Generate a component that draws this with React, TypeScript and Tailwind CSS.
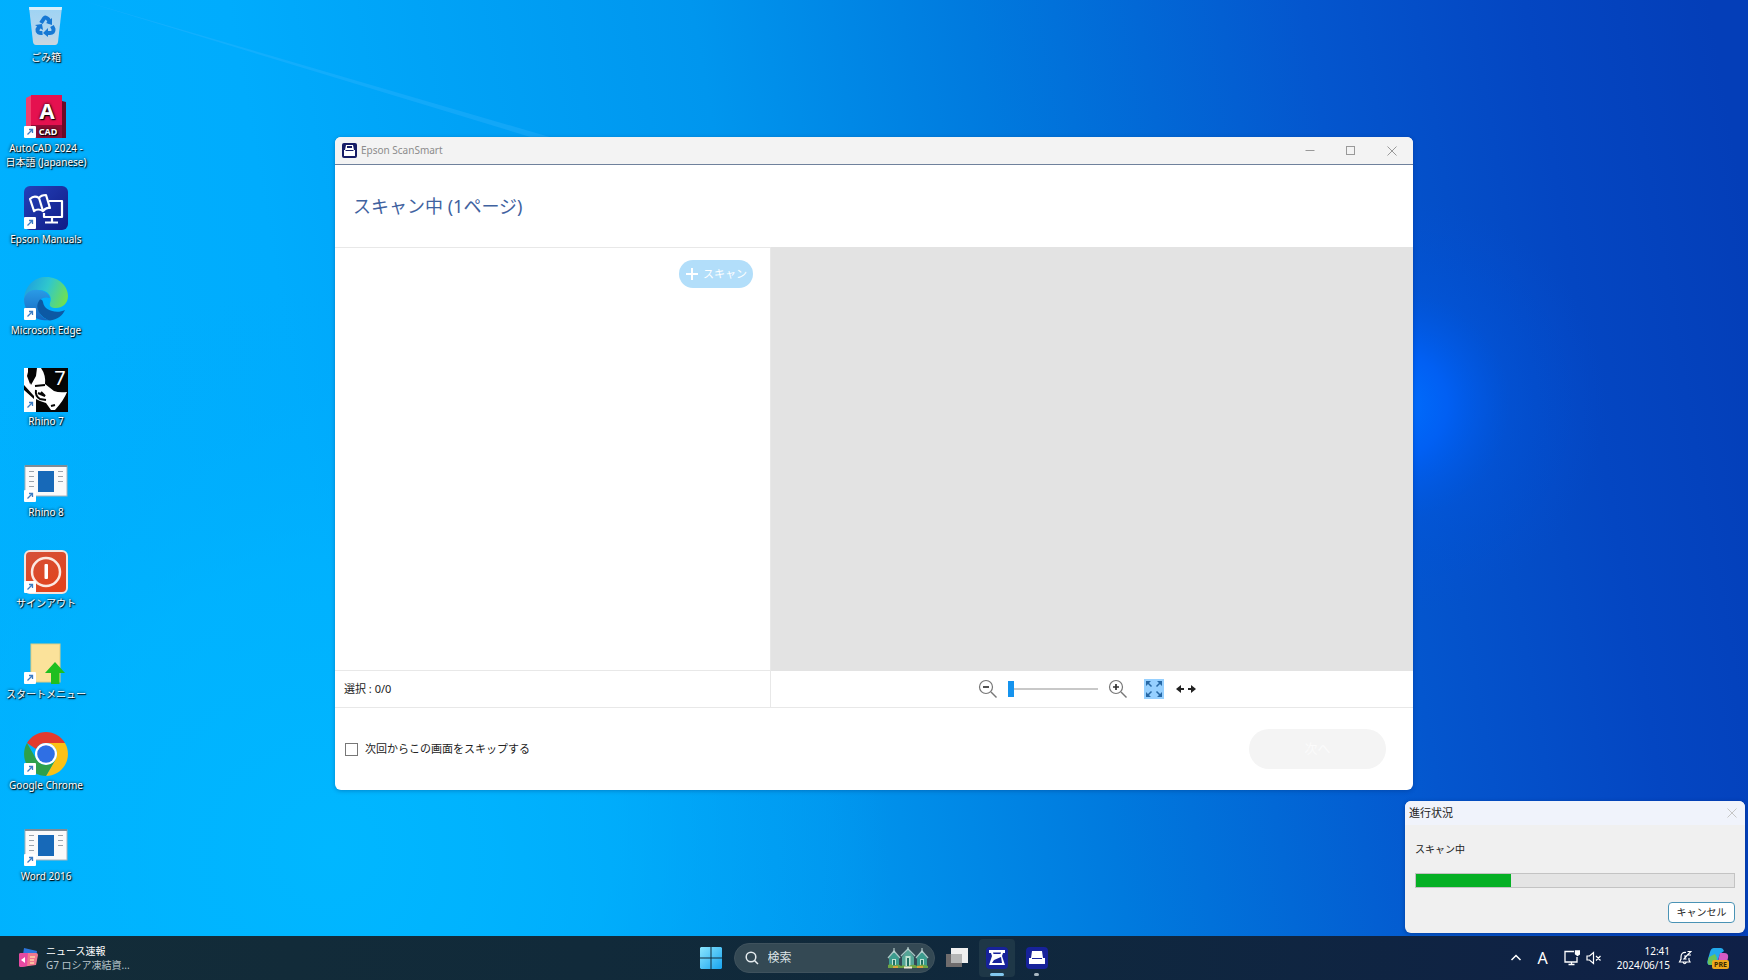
import React from 'react';

const jp = "font-['Noto_Sans','Noto_Sans_CJK_JP',sans-serif]";

function Shortcut() {
  return (
    <g>
      <rect x="0" y="31" width="12" height="12" rx="1" fill="#fff" />
      <path d="M3.500 39.500 L8 35 M5 34.500 H8.500 V38" stroke="#3c7cc4" strokeWidth="1.300" fill="none" />
    </g>
  );
}

function Icon({ children, link = true }: { children: React.ReactNode; link?: boolean }) {
  return (
    <svg viewBox="0 0 44 44" className="size-11 shrink-0" aria-hidden="true">
      {children}
      {link && <Shortcut />}
    </svg>
  );
}

const RecycleBin = () => (
  <Icon link={false}>
    <defs>
      <linearGradient id="bin" x1="0" y1="0" x2="0" y2="1">
        <stop offset="0" stopColor="#9dd3f4" />
        <stop offset="0.700" stopColor="#b4d6ee" />
        <stop offset="1" stopColor="#cdd6dd" />
      </linearGradient>
    </defs>
    <path d="M5 3 L38 3 L34 38 Q33.500 41 31 41 H12 Q9.500 41 9 38 Z" fill="url(#bin)" />
    <path d="M5 3 H38 L37.600 6 H5.400 Z" fill="#d8effb" />
    <g fill="none" stroke="#1678d4" strokeWidth="4">
      <path d="M17 19 L20 14.500 Q22 12.500 24 15 L26 18.500" />
      <path d="M28 22 L29.500 25 Q30 29 26 29 H23" />
      <path d="M18.500 29 Q13 29.500 13.500 25.500 L15.500 22" />
    </g>
    <path d="M28 14 V21 L22 19Z M24 24 V33 L19 29Z M11 21 L18 20 L19 26Z" fill="#1678d4" />
  </Icon>
);

const AutoCad = () => (
  <Icon>
    <path d="M2 3 L8 0 V42 L2 42Z" fill="#f0406f" />
    <path d="M38 6 L42 7 V43 H34Z" fill="#6b0a27" />
    <rect x="7" y="0" width="31" height="31" fill="#e5114f" />
    <rect x="7" y="30" width="31" height="13" fill="#8f0d35" />
    <text x="23" y="24" textAnchor="middle" fontSize="22" fontWeight="700" fill="#fff">A</text>
    <text x="24" y="40" textAnchor="middle" fontSize="9" fontWeight="700" fill="#fff">CAD</text>
  </Icon>
);

const Manuals = () => (
  <Icon>
    <defs>
      <linearGradient id="man" x1="0" y1="0" x2="1" y2="1">
        <stop offset="0" stopColor="#2440b8" />
        <stop offset="1" stopColor="#101c86" />
      </linearGradient>
    </defs>
    <rect width="44" height="44" rx="6" fill="url(#man)" />
    <g fill="none" stroke="#fff" strokeWidth="2.200" strokeLinejoin="round">
      <path d="M25 15 H38 V31 H20 V27 M28 31 V36 M21 36.500 H34" />
      <path d="M6 13 Q10 9 15 12 Q17 9 22 9 L26 22 Q22 21 19 25 Q14 22 10 25 Z" />
      <path d="M15 12 L19 25" />
    </g>
  </Icon>
);

const Edge = () => (
  <Icon>
    <defs>
      <linearGradient id="edgeTop" x1="0" y1="0.300" x2="1" y2="0.600">
        <stop offset="0" stopColor="#1d9fe0" />
        <stop offset="0.500" stopColor="#30c8cc" />
        <stop offset="1" stopColor="#70e050" />
      </linearGradient>
      <linearGradient id="edgeSide" x1="0" y1="0" x2="0" y2="1">
        <stop offset="0" stopColor="#2a9be6" />
        <stop offset="1" stopColor="#1565bf" />
      </linearGradient>
    </defs>
    <path d="M0 22 C1 8 11 0 22 0 C36 0 44 10 44 19 C44 27 38 31 32 31 C27 31 25 29 26 26 C29 20 24 13 15 13 C8 13 2 17 0 22Z" fill="url(#edgeTop)" />
    <path d="M0 22 C2 15 8 12 14 13 C20 13 25 17 26 21 C20 19 14 22 14 29 C14 37 20 43 27 43 C12 45 0 36 0 22Z" fill="url(#edgeSide)" />
    <path d="M15 24 C10 31 17 41 26 43.500 C33 43 39 38 41 33 C33 37 20 34 19 25 C18 22 16 22 15 24Z" fill="#0c59a4" />
  </Icon>
);

const Rhino7 = () => (
  <Icon>
    <rect width="44" height="44" fill="#050505" />
    <path d="M0 0 H4 V8 L7 17 L12 8 L13 0 H17 Q22 7 21 16 L30 23 Q35 25 43 24 Q40 32 31 42 L27 42 L22 35 L16 33 L12 31 V44 H0Z" fill="#fff" />
    <path d="M11 18 L21 17 M12 22 Q11 28 16 31 L22 32 M14 25 L21 28 L17 24 M27 38 L31 37" fill="none" stroke="#050505" strokeWidth="2" />
    <path d="M5 0 H11 L10 9 L6 16 L3 8Z M0 17 L10 28 V31 L0 22Z" fill="#050505" />
    <text x="36" y="17" textAnchor="middle" fontSize="20" fill="#fff">7</text>
  </Icon>
);

const AppWindow = () => (
  <Icon>
    <rect x="1" y="7" width="42" height="30" fill="#fafafa" stroke="#aab3ba" />
    <rect x="1" y="6" width="42" height="2" fill="#7f8c96" />
    <rect x="14" y="12" width="16" height="21" fill="#1769b8" />
    <path d="M5 12.500 H10 M5 17.500 H10 M5 22.500 H10 M5 27.500 H10 M34 12.500 H39 M34 17.500 H39 M34 22.500 H39" stroke="#9ba3ab" />
  </Icon>
);

const SignOut = () => (
  <Icon>
    <defs>
      <linearGradient id="so" x1="0" y1="0" x2="0.600" y2="1">
        <stop offset="0" stopColor="#d4523a" />
        <stop offset="1" stopColor="#e2431c" />
      </linearGradient>
    </defs>
    <rect x="1" y="1" width="42" height="42" rx="5" fill="url(#so)" stroke="#f3e4df" strokeWidth="2" />
    <circle cx="22" cy="22" r="14" fill="none" stroke="#fbe9e2" strokeWidth="2.500" />
    <rect x="20.500" y="14" width="3.500" height="15" rx="1" fill="#fff" />
  </Icon>
);

const StartMenu = () => (
  <Icon>
    <rect x="7" y="3" width="29" height="38" fill="#fbe29a" stroke="#e0cd83" />
    <path d="M21 32 L31 21 L41 32 H35.500 V43 H27 V32Z" fill="#1fbf1f" />
  </Icon>
);

const Chrome = () => (
  <Icon>
    <path d="M3 11 A22 22 0 0 1 41 11 L22 11 A11 11 0 0 0 12 17Z" fill="#e33b2e" />
    <path d="M22 11 H41 A22 22 0 0 1 22 44 L31.500 27.500 A11 11 0 0 0 22 11Z" fill="#fbc116" />
    <path d="M3 11 L12.500 27.500 A11 11 0 0 0 31.500 27.500 L22 44 A22 22 0 0 1 3 11Z" fill="#2da04b" />
    <circle cx="22" cy="22" r="11" fill="#fff" />
    <circle cx="22" cy="22" r="8.800" fill="#2f6fe4" />
  </Icon>
);

const shortcuts = [
  { label: 'ごみ箱', icon: <RecycleBin /> },
  { label: 'AutoCAD 2024 - 日本語 (Japanese)', icon: <AutoCad /> },
  { label: 'Epson Manuals', icon: <Manuals /> },
  { label: 'Microsoft Edge', icon: <Edge /> },
  { label: 'Rhino 7', icon: <Rhino7 /> },
  { label: 'Rhino 8', icon: <AppWindow /> },
  { label: 'サインアウト', icon: <SignOut /> },
  { label: 'スタートメニュー', icon: <StartMenu /> },
  { label: 'Google Chrome', icon: <Chrome /> },
  { label: 'Word 2016', icon: <AppWindow /> },
];

function Wallpaper() {
  return (
    <svg className="absolute inset-0 size-full" viewBox="0 0 1748 980" preserveAspectRatio="none" aria-hidden="true">
      <defs>
        <linearGradient id="wallBase" gradientUnits="userSpaceOnUse" x1="-40" y1="600" x2="1760" y2="290">
          <stop offset="0" stopColor="#00b2ff" />
          <stop offset="0.200" stopColor="#00acfd" />
          <stop offset="0.450" stopColor="#0096ee" />
          <stop offset="0.600" stopColor="#007ade" />
          <stop offset="0.780" stopColor="#0456ce" />
          <stop offset="0.900" stopColor="#0446c2" />
          <stop offset="1" stopColor="#043eb8" />
        </linearGradient>
        <radialGradient id="wallGlow" gradientUnits="userSpaceOnUse" cx="1395" cy="405" r="210">
          <stop offset="0" stopColor="#0070ff" />
          <stop offset="0.250" stopColor="#0062fa" stopOpacity="0.850" />
          <stop offset="0.550" stopColor="#0058e4" stopOpacity="0.350" />
          <stop offset="1" stopColor="#0050d8" stopOpacity="0" />
        </radialGradient>
        <radialGradient id="wallLow" gradientUnits="userSpaceOnUse" cx="330" cy="850" r="560">
          <stop offset="0" stopColor="#00b7ff" />
          <stop offset="0.500" stopColor="#00b5ff" stopOpacity="0.600" />
          <stop offset="1" stopColor="#00a8fa" stopOpacity="0" />
        </radialGradient>
      </defs>
      <rect width="1748" height="980" fill="url(#wallBase)" />
      <rect width="1748" height="980" fill="url(#wallLow)" />
      <rect width="1748" height="980" fill="url(#wallGlow)" />
      <path d="M80 0 L560 140 L1000 300 L540 140Z" fill="#49bcff" opacity="0.250" />
    </svg>
  );
}

function Magnifier({ plus = false }: { plus?: boolean }) {
  return (
    <svg viewBox="0 0 20 20" className="size-5" fill="none" stroke="#777" aria-hidden="true">
      <circle cx="8" cy="8" r="6.500" strokeWidth="1.200" />
      <path d="M13 13 L18.500 18.500" strokeWidth="1.400" />
      <path d={plus ? 'M5 8 H11 M8 5 V11' : 'M5 8 H11'} stroke="#333" strokeWidth="1.700" />
    </svg>
  );
}

function ScanWindow() {
  return (
    <section aria-label="Epson ScanSmart" className="relative flex h-[653px] w-full max-w-[1078px] flex-col overflow-hidden rounded-md bg-white shadow-[0_1px_4px_rgba(0,30,90,0.3)]">
      <header className="flex h-7 shrink-0 items-center border-b border-[#6f819c] bg-[#f3f3f3] pl-[7px]">
        <svg viewBox="0 0 15 15" className="size-[15px]" aria-hidden="true">
          <rect width="15" height="15" rx="2" fill="#161c66" />
          <path d="M4 2 H11 L12 7 H13 V13 H2 V7 H3Z" fill="#fff" />
          <path d="M5 3 H10 V5 H5Z M3.500 7 H11.500 V8 H3.500Z" fill="#161c66" />
        </svg>
        <span className="ml-1 text-[10px] text-[#8c8c8c]">Epson ScanSmart</span>
        <div className="ml-auto flex h-full text-[#999]">
          <button aria-label="Minimize" className="flex w-[41px] items-center justify-center">
            <svg viewBox="0 0 10 10" className="size-[10px]" stroke="currentColor" fill="none"><path d="M0.500 4.500 H9.500" /></svg>
          </button>
          <button aria-label="Maximize" className="flex w-[41px] items-center justify-center">
            <svg viewBox="0 0 10 10" className="size-[10px]" stroke="currentColor" fill="none"><rect x="0.500" y="0.500" width="8" height="8" /></svg>
          </button>
          <button aria-label="Close" className="flex w-[42px] items-center justify-center">
            <svg viewBox="0 0 10 10" className="size-[10px]" stroke="currentColor" fill="none"><path d="M0.500 0.500 L9.500 9.500 M9.500 0.500 L0.500 9.500" /></svg>
          </button>
        </div>
      </header>
      <h1 className="flex h-[82px] shrink-0 items-center pl-[18px] text-[18px] text-[#3f62a0]">スキャン中 (1ページ)</h1>
      <div className="flex min-h-0 flex-1">
        <div className="flex w-[436px] shrink-0 flex-col border-r border-[#e8e8e8]">
          <div className="flex flex-1 items-start justify-end border-t border-[#e8e8e8] pt-3 pr-[17px]">
            <button className="flex h-7 w-[74px] items-center justify-center gap-1 rounded-full bg-[#b2defa] text-[11px] text-white">
              <svg viewBox="0 0 14 14" className="size-[14px]" stroke="#fff" strokeWidth="2" aria-hidden="true"><path d="M7 1 V13 M1 7 H13" /></svg>
              スキャン
            </button>
          </div>
          <div className="flex h-[37px] shrink-0 items-center border-t border-[#e8e8e8] pl-[9px] text-[11px] text-[#222]">選択 : 0/0</div>
        </div>
        <div className="flex min-w-0 flex-1 flex-col">
          <div className="flex-1 bg-[#e3e3e3]" />
          <div className="flex h-9 shrink-0 items-center justify-center pr-[10px]">
            <button aria-label="Zoom out"><Magnifier /></button>
            <input
              type="range"
              aria-label="Zoom"
              defaultValue={0}
              className="mx-[10px] h-4 w-[90px] appearance-none bg-transparent [&::-webkit-slider-runnable-track]:h-[2px] [&::-webkit-slider-runnable-track]:bg-[#c8c8c8] [&::-webkit-slider-thumb]:mt-[-7px] [&::-webkit-slider-thumb]:h-4 [&::-webkit-slider-thumb]:w-[6px] [&::-webkit-slider-thumb]:appearance-none [&::-webkit-slider-thumb]:bg-[#1593ee]"
            />
            <button aria-label="Zoom in"><Magnifier plus /></button>
            <button aria-label="Fit to window" className="ml-4">
              <svg viewBox="0 0 20 20" className="size-5" aria-hidden="true">
                <rect width="20" height="20" fill="#96d0ff" />
                <path d="M2 2 H7 L2 7Z M18 2 H13 L18 7Z M2 18 H7 L2 13Z M18 18 H13 L18 13Z" fill="#2768a5" />
                <path d="M3 3 L7.500 7.500 M17 3 L12.500 7.500 M3 17 L7.500 12.500 M17 17 L12.500 12.500" stroke="#2768a5" strokeWidth="1.500" />
              </svg>
            </button>
            <button aria-label="Fit to width" className="ml-3">
              <svg viewBox="0 0 20 10" className="h-[10px] w-5" fill="#222" aria-hidden="true">
                <path d="M0 5 L5 1 V4 H8 V6 H5 V9Z M20 5 L15 1 V4 H12 V6 H15 V9Z" />
              </svg>
            </button>
          </div>
        </div>
      </div>
      <footer className="flex h-[83px] shrink-0 items-center justify-between border-t border-[#e8e8e8] pr-[27px] pl-[10px]">
        <label className="flex items-center gap-[7px] text-[11px] text-[#222]">
          <input type="checkbox" className="size-[13px] appearance-none border border-[#777] bg-white" />
          次回からこの画面をスキップする
        </label>
        <button disabled className="h-10 w-[137px] rounded-full bg-[#f4f4f4] text-[13px] text-[#fbfbfb]">次へ</button>
      </footer>
    </section>
  );
}

function ProgressDialog() {
  return (
    <section aria-label="進行状況" className="absolute right-[3px] bottom-[3px] flex w-[340px] flex-col overflow-hidden rounded-md bg-[#f0f0f0] text-[11px] text-[#222] shadow-[0_1px_4px_rgba(0,20,80,0.4)]">
      <header className="flex h-6 items-center justify-between bg-[#f0f3fb] pr-2 pl-1">
        <span>進行状況</span>
        <button aria-label="Close" className="text-[#c6c6c6]">
          <svg viewBox="0 0 10 10" className="size-[10px]" stroke="currentColor" fill="none"><path d="M0.500 0.500 L9.500 9.500 M9.500 0.500 L0.500 9.500" /></svg>
        </button>
      </header>
      <div className="flex flex-col px-[10px] pt-4 pb-[10px]">
        <p className="text-[10px] leading-4">スキャン中</p>
        <div role="progressbar" aria-valuenow={30} className="mt-4 h-[15px] border border-[#c3c3c3] bg-[#e4e4e4]">
          <div className="h-full w-[30%] bg-[#06b025]" />
        </div>
        <button className="mt-[14px] h-[21px] w-[67px] self-end rounded border border-[#4a93b5] bg-white text-[10px]">キャンセル</button>
      </div>
    </section>
  );
}

function Houses() {
  return (
    <svg viewBox="0 0 42 22" className="h-[22px] w-[42px]" aria-hidden="true">
      <path d="M2 11 L7 4 L12 11 V19 H2Z M30 11 L35 4 L40 11 V19 H30Z" fill="#3c9c8e" />
      <path d="M15 10 L21 2 L27 10 V20 H15Z" fill="#55a596" />
      <path d="M1 11 L7 4 L13 11 M14 9 L21 2 L28 9 M29 11 L35 4 L41 11" fill="none" stroke="#a9c9c6" strokeWidth="1.300" />
      <path d="M7 1 V5 M21 0 V3 M35 1 V5" stroke="#c9dfdc" />
      <path d="M5 12 H9 V18 H5Z M18.500 9 H23.500 V19 H18.500Z M33 12 H37 V18 H33Z" fill="#bfe3d2" />
      <path d="M6 13 H8 V18 H6Z M20 11 H22 V19 H20Z M34 13 H36 V18 H34Z" fill="#207062" />
      <path d="M1 18 Q4 16 7 19 Q11 16 14 19 Q17 17 20 20 Q26 16 30 19 Q35 16 41 19 V21 H1Z" fill="#6fa544" />
      <path d="M6 20 H11 M30 20 H36" stroke="#d8a23c" strokeWidth="2" />
      <path d="M17 20.500 H25" stroke="#f0ead0" strokeWidth="2" />
    </svg>
  );
}

function Taskbar() {
  return (
    <footer className="relative grid h-11 shrink-0 grid-cols-[1fr_auto_1fr] items-center bg-linear-to-r from-[#132c38] via-[#10293b] to-[#0f2047] text-white">
      <button className="ml-4 flex items-center gap-[6px] justify-self-start text-left">
        <svg viewBox="0 0 24 24" className="size-6" aria-hidden="true">
          <path d="M8 2 L21 5 L19 18 L6 15Z" fill="#2d76dc" />
          <path d="M5 7 H20 Q22 7 22 9 L20 19 L5 21 Q3 21 3 19 V9 Q3 7 5 7Z" fill="#f0788f" />
          <path d="M5 7 H12 L11 20 L5 21 Q3 21 3 19 V9 Q3 7 5 7Z" fill="#e649a2" />
          <path d="M5 14 L9 11 V17Z" fill="#fff" />
          <path d="M14 11 H19 M14 14 H18 M14 17 H18" stroke="#ffd5a8" strokeWidth="1.500" />
        </svg>
        <span className="flex flex-col text-[10px] leading-[14px]">
          <span>ニュース速報</span>
          <span className="text-[#b9c6cd]">G7 ロシア凍結資...</span>
        </span>
      </button>
      <div className="flex h-full items-center pl-[6px]">
        <button aria-label="Start" className="mr-3">
          <svg viewBox="0 0 22 22" className="size-[22px]" aria-hidden="true">
            <defs>
              <linearGradient id="win" x1="0" y1="0" x2="1" y2="1">
                <stop offset="0" stopColor="#8be6ff" />
                <stop offset="1" stopColor="#17a3ee" />
              </linearGradient>
            </defs>
            <path d="M1 0 H10.500 V10.500 H0 V1Z M11.500 0 H21 L22 1 V10.500 H11.500Z M0 11.500 H10.500 V22 H1 L0 21Z M11.500 11.500 H22 V21 L21 22 H11.500Z" fill="url(#win)" />
          </svg>
        </button>
        <label className="flex h-[30px] w-[201px] items-center rounded-full border border-[#3f525d] bg-[#344954] pr-[5px] pl-[10px]">
          <svg viewBox="0 0 14 14" className="size-[14px] shrink-0" fill="none" stroke="#e6ecef" strokeWidth="1.500" aria-hidden="true"><circle cx="6" cy="6" r="4.800" /><path d="M9.500 9.500 L13 13" /></svg>
          <input type="text" aria-label="検索" placeholder="検索" className="ml-[9px] min-w-0 flex-1 bg-transparent text-xs placeholder:text-[#dbe3e7]" />
          <Houses />
        </label>
        <button aria-label="Task view" className="ml-[10px]">
          <svg viewBox="0 0 24 22" className="h-[22px] w-6" aria-hidden="true">
            <rect x="1" y="7" width="16" height="13" fill="#6f6c6d" />
            <rect x="6" y="1" width="17" height="15" fill="#efefef" />
            <rect x="6" y="7" width="11" height="9" fill="#b4b5b5" />
          </svg>
        </button>
        <button aria-label="Epson Scan" className="ml-[10px] flex h-[38px] w-9 flex-col items-center justify-end gap-1 rounded bg-[#1e3747] pb-[1px]">
          <svg viewBox="0 0 22 22" className="size-[22px]" aria-hidden="true">
            <rect width="22" height="22" rx="4" fill="#17229a" />
            <path d="M3 3 H19 V6 H17 L16 9 L19 18 H3 L6 9 L5 6 H3Z" fill="#fff" />
            <path d="M7 5.500 H15 L14.500 7 H7.500Z M6 16 L8 13 L15 10 L16 16Z" fill="#17229a" />
          </svg>
          <span className="h-[3px] w-[14px] rounded-full bg-[#82c8ee]" />
        </button>
        <button aria-label="Epson ScanSmart" className="ml-1 flex h-[38px] w-9 flex-col items-center justify-end gap-1 pb-[1px]">
          <svg viewBox="0 0 22 22" className="size-[22px]" aria-hidden="true">
            <rect width="22" height="22" rx="4" fill="#17229a" />
            <path d="M6 4 H16 L17 11 H19 V17 H3 V11 H5Z" fill="#fff" />
            <path d="M6 11.500 H16" stroke="#17229a" strokeWidth="1" />
          </svg>
          <span className="h-[3px] w-[5px] rounded-full bg-[#a9b8c2]" />
        </button>
      </div>
      <div className="mr-[18px] flex items-center justify-self-end">
        <button aria-label="Show hidden icons">
          <svg viewBox="0 0 12 12" className="size-3" fill="none" stroke="#fff" strokeWidth="1.500"><path d="M1.500 8 L6 3.500 L10.500 8" /></svg>
        </button>
        <span className="ml-4 text-base">A</span>
        <button aria-label="Network and volume" className="ml-4 flex items-center gap-[6px]">
          <svg viewBox="0 0 16 16" className="size-4" fill="none" stroke="#fff" strokeWidth="1.300" aria-hidden="true">
            <path d="M10 1.500 H1 V12 H13 V7 M4.500 14.500 H10.500 M7.500 12 V14.500" />
            <path d="M11.500 1 H15.500 V4 L13.500 5.500 L11.500 4Z" fill="#fff" />
          </svg>
          <svg viewBox="0 0 16 14" className="h-[14px] w-4" fill="none" stroke="#fff" strokeWidth="1.200" aria-hidden="true">
            <path d="M1 5 H3.500 L7.500 1.500 V12.500 L3.500 9 H1Z M10 5 L14.500 9.500 M14.500 5 L10 9.500" />
          </svg>
        </button>
        <button className="ml-[15px] flex flex-col items-end text-[10px] leading-[14px]">
          <span>12:41</span>
          <span>2024/06/15</span>
        </button>
        <button aria-label="Notifications" className="ml-2">
          <svg viewBox="0 0 14 16" className="h-4 w-[14px]" fill="none" stroke="#fff" strokeWidth="1.200" aria-hidden="true">
            <path d="M8 2.500 Q3 2 3 7 V9 L1.500 12 H12 L11 10 V8 M5 12 Q6.500 15.500 8.500 12 M9.500 1.500 H13 L9.500 5 H13 M6 6 H8.500 L6 9 H8.500" />
          </svg>
        </button>
        <button aria-label="Copilot" className="ml-[14px]">
          <svg viewBox="0 0 24 24" className="size-6" aria-hidden="true">
            <path d="M8 2 H15 Q17 2 18 5 L14 8 L11 17 Q10 20 7 19 H4 Q0 19 2 13 L4 6 Q5 2 8 2Z" fill="#22a9ed" />
            <path d="M3 11 L9 8 L11 12 L9 19 H4 Q1 19 2 14Z" fill="#6ac45a" />
            <path d="M14 7 H18 Q23 7 22 12 L20 19 H11Z" fill="#d65bc3" />
            <rect x="6" y="14" width="17" height="9" rx="2" fill="#efa91e" />
            <text x="14.500" y="21" textAnchor="middle" fontSize="7" fontWeight="700" fill="#3b2a00">PRE</text>
          </svg>
        </button>
      </div>
    </footer>
  );
}

export default function App() {
  return (
    <div className={`relative flex h-screen flex-col overflow-hidden ${jp}`}>
      <Wallpaper />
      <main className="relative flex min-h-0 flex-1 justify-center pt-[137px]">
        <nav className="absolute top-1 left-0 flex w-23 flex-col">
          {shortcuts.map((s) => (
            <a key={s.label} href="#" className="flex h-[91px] flex-col items-center gap-[2px] text-center text-[10px] leading-[14px] text-white [text-shadow:1px_1px_1px_#000,0_0_3px_#000]">
              {s.icon}
              <span className="px-1">{s.label}</span>
            </a>
          ))}
        </nav>
        <ScanWindow />
        <ProgressDialog />
      </main>
      <Taskbar />
    </div>
  );
}
